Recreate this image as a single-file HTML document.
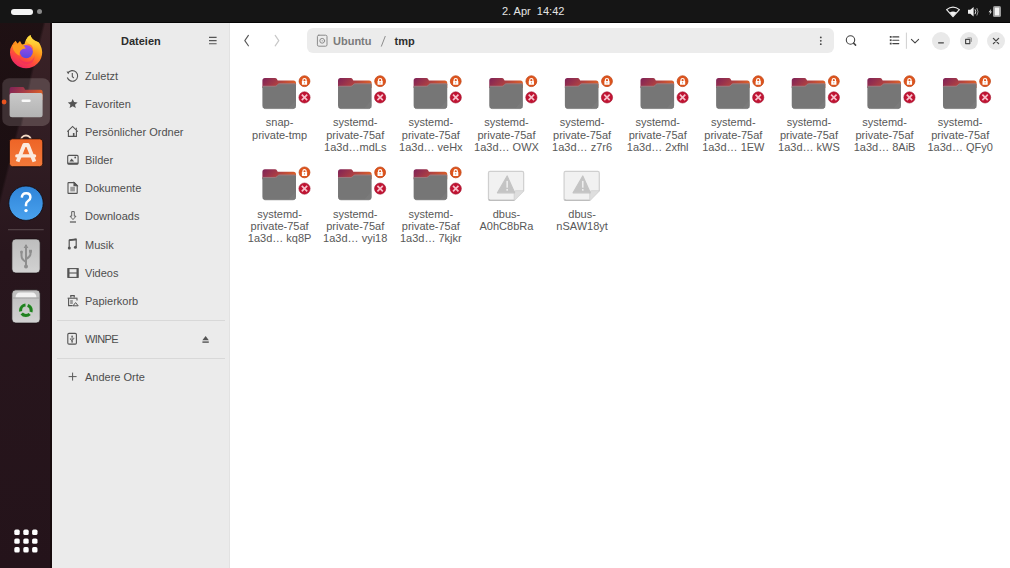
<!DOCTYPE html>
<html><head><meta charset="utf-8">
<style>
*{margin:0;padding:0;box-sizing:border-box}
html,body{width:1010px;height:568px;overflow:hidden;background:#151515;font-family:"Liberation Sans",sans-serif;position:relative}
.abs{position:absolute}
#top{position:absolute;left:0;top:0;width:1010px;height:22px;background:#151515}
#topline{position:absolute;left:52px;top:22px;width:958px;height:1px;background:#050505}
#dock{position:absolute;left:0;top:23px;width:51px;height:545px;
  background:linear-gradient(104deg,rgba(20,10,12,0.72) 23%,rgba(20,10,12,0) 24.5%),linear-gradient(180deg,#3a2226 0px,#311d23 120px,#28161d 230px,#24131a 545px)}
#dockedge{position:absolute;left:50px;top:23px;width:2px;height:545px;background:#160a0c}
#win{position:absolute;left:52px;top:23px;width:958px;height:545px;background:#fff;overflow:hidden}
#side{position:absolute;left:0;top:0;width:177px;height:545px;background:#ebebeb}
#sideedge{position:absolute;left:177px;top:0;width:1px;height:545px;background:#e2e2e2}
.si{position:absolute;left:33px;font-size:11px;color:#4e4e4e;white-space:nowrap;line-height:13px}
.sep{position:absolute;left:5px;width:168px;height:1px;background:#d8d8d8}
.lbl{position:absolute;width:80px;text-align:center;font-size:11px;line-height:12.3px;color:#585858;white-space:nowrap}
#pathbar{position:absolute;left:255px;top:5px;width:527px;height:25px;border-radius:6px;background:#ececec}
.wbtn{position:absolute;top:9px;width:18px;height:18px;border-radius:50%;background:#e9e9e9}
svg{position:absolute;left:0;top:0}
</style></head><body>
<div id="top">
  <div class="abs" style="left:11px;top:8.5px;width:22px;height:6.5px;border-radius:4px;background:#f4f4f4"></div>
  <div class="abs" style="left:37px;top:9.1px;width:5px;height:5px;border-radius:50%;background:#8a8a8a"></div>
  <div class="abs" style="left:502px;top:5px;font-size:11px;color:#e4e4e4;line-height:13px;white-space:pre">2. Apr  14:42</div>
</div>
<div id="topline"></div>
<div id="dock"></div>
<div id="dockedge"></div>
<div id="win">
  <div id="side">
    <div class="abs" style="left:69px;top:12px;font-size:11px;font-weight:bold;color:#2b2b2b;line-height:13px">Dateien</div>
    <div class="si" style="top:47px">Zuletzt</div>
    <div class="si" style="top:75px">Favoriten</div>
    <div class="si" style="top:103px">Persönlicher Ordner</div>
    <div class="si" style="top:131px">Bilder</div>
    <div class="si" style="top:159px">Dokumente</div>
    <div class="si" style="top:187px">Downloads</div>
    <div class="si" style="top:215.6px">Musik</div>
    <div class="si" style="top:243.7px">Videos</div>
    <div class="si" style="top:271.8px">Papierkorb</div>
    <div class="sep" style="top:297px"></div>
    <div class="si" style="top:310px;letter-spacing:-0.6px">WINPE</div>
    <div class="sep" style="top:335px"></div>
    <div class="si" style="top:348px">Andere Orte</div>
  </div>
  <div id="sideedge"></div>
  <div id="pathbar"></div>
  <div class="abs" style="left:281px;top:12px;font-size:11px;font-weight:bold;color:#7a7a7a;line-height:13px">Ubuntu</div>
  <div class="abs" style="left:342.5px;top:12px;font-size:11px;font-weight:bold;color:#2e2e2e;line-height:13px">tmp</div>
  <div class="wbtn" style="left:880px"></div>
  <div class="wbtn" style="left:907.5px"></div>
  <div class="wbtn" style="left:935px"></div>
</div>
<div class="lbl" style="left:239.60px;top:116.34px">snap-<br>private-tmp</div>
<div class="lbl" style="left:315.22px;top:116.34px">systemd-<br>private-75af<br>1a3d…mdLs</div>
<div class="lbl" style="left:390.84px;top:116.34px">systemd-<br>private-75af<br>1a3d… veHx</div>
<div class="lbl" style="left:466.46px;top:116.34px">systemd-<br>private-75af<br>1a3d… OWX</div>
<div class="lbl" style="left:542.08px;top:116.34px">systemd-<br>private-75af<br>1a3d… z7r6</div>
<div class="lbl" style="left:617.70px;top:116.34px">systemd-<br>private-75af<br>1a3d… 2xfhl</div>
<div class="lbl" style="left:693.32px;top:116.34px">systemd-<br>private-75af<br>1a3d… 1EW</div>
<div class="lbl" style="left:768.94px;top:116.34px">systemd-<br>private-75af<br>1a3d… kWS</div>
<div class="lbl" style="left:844.56px;top:116.34px">systemd-<br>private-75af<br>1a3d… 8AiB</div>
<div class="lbl" style="left:920.18px;top:116.34px">systemd-<br>private-75af<br>1a3d… QFy0</div>
<div class="lbl" style="left:239.60px;top:207.54px">systemd-<br>private-75af<br>1a3d… kq8P</div>
<div class="lbl" style="left:315.22px;top:207.54px">systemd-<br>private-75af<br>1a3d… vyi18</div>
<div class="lbl" style="left:390.84px;top:207.54px">systemd-<br>private-75af<br>1a3d… 7kjkr</div>
<div class="lbl" style="left:466.46px;top:207.54px">dbus-<br>A0hC8bRa</div>
<div class="lbl" style="left:542.08px;top:207.54px">dbus-<br>nSAW18yt</div>
<svg width="1010" height="568" viewBox="0 0 1010 568">
<defs>
  <linearGradient id="fback" x1="0" y1="0" x2="1" y2="0.3">
    <stop offset="0" stop-color="#7e2258"/>
    <stop offset="0.5" stop-color="#a83c45"/>
    <stop offset="1" stop-color="#d95e2a"/>
  </linearGradient>
  <linearGradient id="ffront" x1="0" y1="0" x2="0" y2="1">
    <stop offset="0" stop-color="#c9c9c9"/>
    <stop offset="1" stop-color="#b3b3b3"/>
  </linearGradient>
  <linearGradient id="ffring" x1="0.25" y1="1" x2="0.75" y2="0">
    <stop offset="0" stop-color="#e9206c"/>
    <stop offset="0.3" stop-color="#ff4a3e"/>
    <stop offset="0.55" stop-color="#ff8a1c"/>
    <stop offset="0.8" stop-color="#ffc62c"/>
    <stop offset="1" stop-color="#ffe444"/>
  </linearGradient>
  <linearGradient id="ffflame" x1="0" y1="0" x2="0.2" y2="1">
    <stop offset="0" stop-color="#ffdf40" stop-opacity="0.95"/>
    <stop offset="0.55" stop-color="#ffd03a" stop-opacity="0.7"/>
    <stop offset="1" stop-color="#ffb030" stop-opacity="0"/>
  </linearGradient>
  <linearGradient id="ffglobe" x1="0" y1="0" x2="0" y2="1">
    <stop offset="0" stop-color="#a04ae8"/>
    <stop offset="1" stop-color="#5a48e0"/>
  </linearGradient>
  <linearGradient id="helpg" x1="0" y1="0" x2="0" y2="1">
    <stop offset="0" stop-color="#2f84d8"/>
    <stop offset="1" stop-color="#4aa2ee"/>
  </linearGradient>
  <linearGradient id="usbg" x1="0" y1="0" x2="0" y2="1">
    <stop offset="0" stop-color="#bdbdbd"/>
    <stop offset="1" stop-color="#d2d2d2"/>
  </linearGradient>
  <linearGradient id="shopg" x1="0" y1="0" x2="0" y2="1">
    <stop offset="0" stop-color="#ee6426"/>
    <stop offset="1" stop-color="#f3793a"/>
  </linearGradient>
  <linearGradient id="hlg" x1="0" y1="0" x2="1" y2="0.2">
    <stop offset="0" stop-color="#3e3033"/>
    <stop offset="0.55" stop-color="#3e3033"/>
    <stop offset="0.6" stop-color="#574447"/>
    <stop offset="1" stop-color="#574447"/>
  </linearGradient>
</defs>

<!-- ===== top bar right icons ===== -->
<g fill="#f0f0f0">
  <path d="M946.6 9.6 Q953 4.6 959.4 9.6 L953 16.6 Z" fill="none" stroke="#e8e8e8" stroke-width="1.2" stroke-linejoin="round"/>
  <path d="M949.6 12.4 Q953 10.4 956.4 12.4 L953 16.4 Z" fill="#f0f0f0"/>
  <path d="M968 9.8 H970.3 L973.6 7 V16.5 L970.3 13.7 H968 Z"/>
  <path d="M975 9.3 Q976.6 11.75 975 14.2" fill="none" stroke="#e0e0e0" stroke-width="1"/>
  <path d="M976.8 8 Q979.2 11.75 976.8 15.5" fill="none" stroke="#9a9a9a" stroke-width="1"/>
  <rect x="993" y="6" width="8" height="11" rx="1.6" fill="#9a9a9a"/>
  <rect x="994.8" y="7.6" width="4.4" height="7.8" fill="#f4f4f4"/>
  <path d="M991.3 8.8 L988.6 12.2 H990.3 L989.3 15 L992 11.4 H990.4 Z"/>
</g>

<!-- ===== dock ===== -->
<!-- firefox -->
<g>
  <path d="M15.6 40.7 L17.5 43.6 L20 41.1 L21.9 44.4 L24.5 44 Q25 42 25.8 40.2 Q27.4 36.6 30.4 35 Q30.9 37.6 32.6 38.9 Q34.4 40.4 35.6 41.1 L38.5 42.2 Q40.4 44.2 41.1 47 Q42.2 49.4 42.2 52.2 A16.1 16.1 0 0 1 10 52.2 Q10 48.4 11.9 45.5 Q13.4 42.6 15.6 40.7 Z" fill="url(#ffring)"/>
  <path d="M30.4 35 Q30.9 37.6 32.6 38.9 Q34.4 40.4 35.6 41.1 L38.5 42.2 Q40.4 44.2 41.1 47 Q42.2 49.4 42.2 52.2 L33 50 Q30 44 25.8 40.2 Q27.4 36.6 30.4 35 Z" fill="url(#ffflame)"/>
  <circle cx="26.3" cy="51.6" r="6.6" fill="url(#ffglobe)"/>
  <path d="M12.2 45.4 Q17 43.2 21.2 44.4 Q24.6 45.4 25.9 48.6 Q22.6 48.4 20.6 50.4 Q19 52.4 19.7 55.8 Q17.2 55 15.4 52.8 Q13 50 12.2 45.4 Z" fill="#ff9b20"/>
  <path d="M26.5 45 Q31.5 45.4 32.9 50.4 Q33.4 47.2 31.4 45.2 Q29 43.6 26.5 45 Z" fill="#ff5a4a" opacity="0.8"/>
  <path d="M34.6 55.4 Q33 61.4 26.6 62 Q21.4 62 18.8 57.6 Q20.6 64.2 27.4 64.2 Q34.6 63.4 34.6 55.4 Z" fill="#e8246a" opacity="0.45"/>
</g>
<!-- files highlight -->
<rect x="2.3" y="78.3" width="47.6" height="47.6" rx="7" fill="url(#hlg)"/>
<circle cx="4.1" cy="102" r="2.4" fill="#e9541f"/>
<g>
  <path d="M9.6 89 Q9.6 87 11.6 87 H22.6 Q23.8 87 24.3 88 L25 89.7 H40.6 Q42.6 89.7 42.6 91.7 V100 H9.6 Z" fill="url(#fback)"/>
  <path d="M9.6 94.9 Q9.6 92.9 11.6 92.9 H40.6 Q42.6 92.9 42.6 94.9 V114.7 Q42.6 117.2 40.1 117.2 H12.1 Q9.6 117.2 9.6 114.7 Z" fill="url(#ffront)"/>
  <rect x="21.5" y="99.4" width="9.2" height="2.7" rx="1.3" fill="#fafafa"/>
</g>
<!-- app center -->
<g>
  <path d="M21 141.5 V140.4 A5 5 0 0 1 31 140.4 V141.5" fill="none" stroke="#f3d9c4" stroke-width="2"/>
  <rect x="9.4" y="138.8" width="33.4" height="27.9" rx="3.2" fill="url(#shopg)" stroke="#10080a" stroke-width="0.8"/>
  <path d="M17.6 161.6 L24.2 145 H27.8 L34.4 161.6" fill="none" stroke="#fbeadf" stroke-width="3.9" stroke-linejoin="round"/>
  <rect x="15.2" y="154.2" width="21" height="3.2" rx="1.5" fill="#fbeadf"/>
</g>
<!-- help -->
<g>
  <circle cx="26" cy="203.2" r="17.2" fill="url(#helpg)" stroke="#10080a" stroke-width="0.8"/>
  <path d="M21.8 197.6 Q22 193.2 26.2 193.2 Q30.4 193.2 30.4 197.2 Q30.4 199.6 28 201 Q26 202.2 26 204.6 V206.2" fill="none" stroke="#fff" stroke-width="2.5"/>
  <circle cx="26" cy="210.6" r="1.7" fill="#fff"/>
</g>
<rect x="8" y="229.2" width="35.7" height="1" fill="#5a4b4f"/>
<!-- usb -->
<g>
  <rect x="11.8" y="238.9" width="28.4" height="34.2" rx="4" fill="url(#usbg)" stroke="#1a1014" stroke-width="0.8"/>
  <g stroke="#8e8e8e" stroke-width="2" fill="none">
    <path d="M26 245 V266"/>
    <path d="M26 262 Q21.5 259.5 21.5 255.5 V253"/>
    <path d="M26 259 Q30.5 257 30.5 253.5 V251.5"/>
  </g>
  <path d="M23.6 248 L26 244 L28.4 248 Z" fill="#8e8e8e"/>
  <circle cx="26" cy="266.5" r="2" fill="#8e8e8e"/>
  <circle cx="21.5" cy="252" r="1.5" fill="#8e8e8e"/>
  <rect x="29" y="249.8" width="3" height="2.8" fill="#8e8e8e"/>
</g>
<!-- trash -->
<g>
  <rect x="11.8" y="289.8" width="28.4" height="33.3" rx="4" fill="url(#usbg)" stroke="#1a1014" stroke-width="0.8"/>
  <path d="M15.5 297.5 Q16 292.4 20 292.4 H32 Q36 292.4 36.5 297.5 Z" fill="#f2f2f2"/>
  <path d="M13 298 H39" stroke="#9a9a9a" stroke-width="0.8"/>
  <circle cx="25.9" cy="310.3" r="5.3" fill="none" stroke="#9fe09a" stroke-width="3.8" stroke-dasharray="8.8 2.3" stroke-dashoffset="-4" opacity="0.5"/>
  <circle cx="25.9" cy="310.3" r="5.3" fill="none" stroke="#1f801f" stroke-width="3" stroke-dasharray="8.8 2.3" stroke-dashoffset="-4"/>
</g>
<!-- app grid -->
<g fill="#ffffff">
  <rect x="14.3" y="529.6" width="5.4" height="5.4" rx="1.6"/>
  <rect x="23.3" y="529.6" width="5.4" height="5.4" rx="1.6"/>
  <rect x="32.1" y="529.6" width="5.4" height="5.4" rx="1.6"/>
  <rect x="14.3" y="538.4" width="5.4" height="5.4" rx="1.6"/>
  <rect x="23.3" y="538.4" width="5.4" height="5.4" rx="1.6"/>
  <rect x="32.1" y="538.4" width="5.4" height="5.4" rx="1.6"/>
  <rect x="14.3" y="547.1" width="5.4" height="5.4" rx="1.6"/>
  <rect x="23.3" y="547.1" width="5.4" height="5.4" rx="1.6"/>
  <rect x="32.1" y="547.1" width="5.4" height="5.4" rx="1.6"/>
</g>

<!-- ===== sidebar icons ===== -->
<g fill="none" stroke="#545454" stroke-width="1.1">
  <!-- hamburger -->
  <path d="M209 37.4 H216.6 M209 40.6 H216.6 M209 43.8 H216.6" stroke="#555"/>
  <!-- clock -->
  <path d="M67.8 73.2 A5.3 5.3 0 1 1 67.3 77.5"/>
  <path d="M72.3 73 V76.6 L73.8 78" />
  <path d="M66.5 71.5 L69.3 71.8 L68.4 74.3 Z" fill="#545454" stroke="none"/>
  <path d="M72.7 98.9 L74.1 102.1 L77.6 102.4 L75 104.7 L75.8 108.1 L72.7 106.3 L69.6 108.1 L70.4 104.7 L67.8 102.4 L71.3 102.1 Z" fill="#545454" stroke="none"/>
  <!-- house -->
  <path d="M67.3 131.6 L72.6 126.4 L77.8 131.6"/>
  <path d="M68.4 130.8 V136.4 H76.4 V130.8"/>
  <path d="M76.3 129.8 V127.8"/>
  <rect x="72.9" y="133" width="1.6" height="3.4" fill="#545454" stroke="none"/>
  <!-- pictures -->
  <rect x="67.7" y="155.4" width="10.4" height="8.7" rx="1"/>
  <path d="M67.7 163.4 H78.1" stroke-width="1.6"/>
  <path d="M69.4 161.6 L71.6 158.6 L74.2 161.6 Z" fill="#545454" stroke="none"/>
  <circle cx="75.2" cy="157.5" r="0.9" fill="#545454" stroke="none"/>
  <!-- document -->
  <path d="M68 183.2 Q68 182.6 68.6 182.6 H74.2 L77.2 185.6 V193 Q77.2 193.4 76.8 193.4 H68.4 Q68 193.4 68 193 Z"/>
  <path d="M74 182.6 L77.2 185.8 H74 Z" fill="#545454"/>
  <rect x="70.3" y="186.8" width="4.6" height="4.6" fill="#9a9a9a" stroke="none"/>
  <!-- download -->
  <path d="M71.7 211.6 H74.3 V216.2 H76 L73 219.6 L70 216.2 H71.7 Z" stroke-width="0.9"/>
  <path d="M69.9 222 H76" stroke-width="1.2"/>
  <!-- music -->
  <path d="M69.2 247.8 V240.2 L76.2 239.3 V246.8" stroke-width="1.2"/>
  <path d="M69.2 240.2 L76.2 239.3" stroke-width="1.8"/>
  <circle cx="69.3" cy="248" r="1.5" fill="#545454" stroke="none"/>
  <circle cx="75.4" cy="247.3" r="1.5" fill="#545454" stroke="none"/>
  <!-- video -->
  <rect x="67.9" y="268.6" width="10.2" height="8.8" />
  <path d="M68.6 268.6 V277.4 M77.4 268.6 V277.4" stroke-width="1.8"/>
  <path d="M68 273 H78"/>
  <!-- trash -->
  <path d="M68.6 298.3 V305.6 H72.6"/>
  <path d="M67.6 298.2 H77.4"/>
  <path d="M70.8 297.6 V295.6 H74.2 V297.6" stroke-width="1.2"/>
  <path d="M77 298.6 V300.4"/>
  <rect x="70.2" y="300" width="2.6" height="4" fill="#9a9a9a" stroke="none"/>
  <path d="M75.6 302.6 L78.2 305.8 H73 Z" stroke-width="1"/>
  <!-- usb drive -->
  <rect x="67.8" y="333.4" width="8.6" height="10.7" rx="1.2"/>
  <path d="M72.1 336.4 V342 M70.4 338.4 V339.4 L72.1 340.8 M73.8 337.8 V338.8 L72.1 340.2" stroke-width="0.9"/><circle cx="72.1" cy="336.2" r="0.8" fill="#545454" stroke="none"/><circle cx="72.1" cy="342" r="0.8" fill="#545454" stroke="none"/>
  <!-- eject -->
  <path d="M202.4 340.3 L205.6 336 L208.8 340.3 Z" fill="#545454" stroke="none"/>
  <rect x="202.4" y="341.4" width="6.4" height="1.4" fill="#545454" stroke="none"/>
  <!-- plus -->
  <path d="M72.6 372.6 V380.6 M68.6 376.6 H76.6" stroke="#5a5a5a" stroke-width="1"/>
</g>

<!-- ===== header bar icons ===== -->
<g fill="none" stroke="#444" stroke-width="1.2" stroke-linecap="round" stroke-linejoin="round">
  <path d="M248.4 35.4 L244.8 40.6 L248.4 45.8" stroke="#555" stroke-width="1.1"/>
  <path d="M275.2 35.4 L278.8 40.6 L275.2 45.8" stroke="#c8c8c8"/>
  <!-- drive icon -->
  <rect x="317.4" y="35.2" width="9.6" height="11" rx="1.4" stroke="#8a8a8a" stroke-width="1"/>
  <circle cx="322.2" cy="40.8" r="2.4" stroke="#8a8a8a" stroke-width="1"/>
  <circle cx="322.2" cy="40.8" r="0.6" fill="#8a8a8a" stroke="none"/>
  <path d="M385.2 36.4 L381.4 46.2" stroke="#8c8c8c" stroke-width="1"/>
  <!-- kebab -->
  <circle cx="820.8" cy="37.4" r="0.9" fill="#444" stroke="none"/>
  <circle cx="820.8" cy="40.8" r="0.9" fill="#444" stroke="none"/>
  <circle cx="820.8" cy="44.2" r="0.9" fill="#444" stroke="none"/>
  <!-- search -->
  <circle cx="850.5" cy="40" r="4.2" stroke-width="1.1"/>
  <path d="M853.6 43.1 L855.6 45.1" stroke-width="1.5"/>
  <!-- list -->
  <path d="M892.8 36.9 H898.8 M892.8 40.2 H898.8 M892.8 43.6 H898.8" stroke-width="1.1"/>
  <rect x="889.8" y="36" width="1.8" height="1.8" fill="#444" stroke="none"/><rect x="889.8" y="39.3" width="1.8" height="1.8" fill="#444" stroke="none"/><rect x="889.8" y="42.7" width="1.8" height="1.8" fill="#444" stroke="none"/>
  <path d="M906.4 33 V48.4" stroke="#cfcfcf" stroke-width="1"/>
  <path d="M911.4 39.4 L915 42.8 L918.6 39.4" stroke-width="1.1"/>
  <!-- min -->
  <path d="M938.6 42.8 H943.4" stroke-width="1.2"/>
  <!-- max -->
  <rect x="965.6" y="39.4" width="4.2" height="4.2" stroke-width="1.2" stroke="#484848"/>
  <path d="M967.8 37.9 H971.4 V41.5" stroke-width="1" stroke="#9a9a9a"/>
  <!-- close -->
  <path d="M993.4 38.4 L998.6 43.6 M998.6 38.4 L993.4 43.6" stroke-width="1.3"/>
</g>

<!-- ===== file icons ===== -->
<g transform="translate(262.40,78.00)">
<path d="M0 2.5 Q0 0 2.5 0 H12.6 Q14 0 14.6 1.2 L15.3 2.5 H31.1 Q33.6 2.5 33.6 5 V10 H0 Z" fill="url(#fback)"/>
<path d="M0 8.9 Q0 7.9 1 7.9 H13 Q14 7.9 14.6 7.1 L15.4 6.2 Q16 5.5 17 5.5 H32.6 Q33.6 5.5 33.6 6.5 V27.6 Q33.6 30.6 30.6 30.6 H3 Q0 30.6 0 27.6 Z" fill="#767676"/>
<path d="M0.3 8.9 Q0.3 8.2 1 8.2 H13 Q14 8.2 14.6 7.4 L15.4 6.5 Q16 5.8 17 5.8 H32.6 Q33.3 5.8 33.3 6.5" fill="none" stroke="#a87a82" stroke-width="0.9" opacity="0.9"/>
<path d="M0.6 29.4 Q1.2 30.6 3 30.6 H30.6 Q32.4 30.6 33.2 29.2" fill="none" stroke="#5e5e5e" stroke-width="0.8" opacity="0.7"/>
<path d="M33.6 22 V27.6 Q33.6 30.6 30.6 30.6 H26 Z" fill="#858585" opacity="0.3"/>
</g>
<circle cx="304.50" cy="81.20" r="5.4" fill="#de541c" stroke="#c24618" stroke-width="0.8"/>
<path d="M302.90 81.40 V80.10 A1.6 1.6 0 0 1 306.10 80.10 V81.40" fill="none" stroke="#fff" stroke-width="1.2"/>
<rect x="301.90" y="80.90" width="5.2" height="3.8" rx="0.5" fill="#fff"/>
<rect x="304.10" y="81.70" width="0.8" height="1.8" fill="#d88a66"/>
<circle cx="304.50" cy="97.40" r="5.6" fill="#c11433" stroke="#a0102c" stroke-width="0.6"/>
<path d="M301.80 94.70 L307.20 100.10 M307.20 94.70 L301.80 100.10" stroke="#f7c0cb" stroke-width="1.7" stroke-linecap="butt"/>
<g transform="translate(338.02,78.00)">
<path d="M0 2.5 Q0 0 2.5 0 H12.6 Q14 0 14.6 1.2 L15.3 2.5 H31.1 Q33.6 2.5 33.6 5 V10 H0 Z" fill="url(#fback)"/>
<path d="M0 8.9 Q0 7.9 1 7.9 H13 Q14 7.9 14.6 7.1 L15.4 6.2 Q16 5.5 17 5.5 H32.6 Q33.6 5.5 33.6 6.5 V27.6 Q33.6 30.6 30.6 30.6 H3 Q0 30.6 0 27.6 Z" fill="#767676"/>
<path d="M0.3 8.9 Q0.3 8.2 1 8.2 H13 Q14 8.2 14.6 7.4 L15.4 6.5 Q16 5.8 17 5.8 H32.6 Q33.3 5.8 33.3 6.5" fill="none" stroke="#a87a82" stroke-width="0.9" opacity="0.9"/>
<path d="M0.6 29.4 Q1.2 30.6 3 30.6 H30.6 Q32.4 30.6 33.2 29.2" fill="none" stroke="#5e5e5e" stroke-width="0.8" opacity="0.7"/>
<path d="M33.6 22 V27.6 Q33.6 30.6 30.6 30.6 H26 Z" fill="#858585" opacity="0.3"/>
</g>
<circle cx="380.12" cy="81.20" r="5.4" fill="#de541c" stroke="#c24618" stroke-width="0.8"/>
<path d="M378.52 81.40 V80.10 A1.6 1.6 0 0 1 381.72 80.10 V81.40" fill="none" stroke="#fff" stroke-width="1.2"/>
<rect x="377.52" y="80.90" width="5.2" height="3.8" rx="0.5" fill="#fff"/>
<rect x="379.72" y="81.70" width="0.8" height="1.8" fill="#d88a66"/>
<circle cx="380.12" cy="97.40" r="5.6" fill="#c11433" stroke="#a0102c" stroke-width="0.6"/>
<path d="M377.42 94.70 L382.82 100.10 M382.82 94.70 L377.42 100.10" stroke="#f7c0cb" stroke-width="1.7" stroke-linecap="butt"/>
<g transform="translate(413.64,78.00)">
<path d="M0 2.5 Q0 0 2.5 0 H12.6 Q14 0 14.6 1.2 L15.3 2.5 H31.1 Q33.6 2.5 33.6 5 V10 H0 Z" fill="url(#fback)"/>
<path d="M0 8.9 Q0 7.9 1 7.9 H13 Q14 7.9 14.6 7.1 L15.4 6.2 Q16 5.5 17 5.5 H32.6 Q33.6 5.5 33.6 6.5 V27.6 Q33.6 30.6 30.6 30.6 H3 Q0 30.6 0 27.6 Z" fill="#767676"/>
<path d="M0.3 8.9 Q0.3 8.2 1 8.2 H13 Q14 8.2 14.6 7.4 L15.4 6.5 Q16 5.8 17 5.8 H32.6 Q33.3 5.8 33.3 6.5" fill="none" stroke="#a87a82" stroke-width="0.9" opacity="0.9"/>
<path d="M0.6 29.4 Q1.2 30.6 3 30.6 H30.6 Q32.4 30.6 33.2 29.2" fill="none" stroke="#5e5e5e" stroke-width="0.8" opacity="0.7"/>
<path d="M33.6 22 V27.6 Q33.6 30.6 30.6 30.6 H26 Z" fill="#858585" opacity="0.3"/>
</g>
<circle cx="455.74" cy="81.20" r="5.4" fill="#de541c" stroke="#c24618" stroke-width="0.8"/>
<path d="M454.14 81.40 V80.10 A1.6 1.6 0 0 1 457.34 80.10 V81.40" fill="none" stroke="#fff" stroke-width="1.2"/>
<rect x="453.14" y="80.90" width="5.2" height="3.8" rx="0.5" fill="#fff"/>
<rect x="455.34" y="81.70" width="0.8" height="1.8" fill="#d88a66"/>
<circle cx="455.74" cy="97.40" r="5.6" fill="#c11433" stroke="#a0102c" stroke-width="0.6"/>
<path d="M453.04 94.70 L458.44 100.10 M458.44 94.70 L453.04 100.10" stroke="#f7c0cb" stroke-width="1.7" stroke-linecap="butt"/>
<g transform="translate(489.26,78.00)">
<path d="M0 2.5 Q0 0 2.5 0 H12.6 Q14 0 14.6 1.2 L15.3 2.5 H31.1 Q33.6 2.5 33.6 5 V10 H0 Z" fill="url(#fback)"/>
<path d="M0 8.9 Q0 7.9 1 7.9 H13 Q14 7.9 14.6 7.1 L15.4 6.2 Q16 5.5 17 5.5 H32.6 Q33.6 5.5 33.6 6.5 V27.6 Q33.6 30.6 30.6 30.6 H3 Q0 30.6 0 27.6 Z" fill="#767676"/>
<path d="M0.3 8.9 Q0.3 8.2 1 8.2 H13 Q14 8.2 14.6 7.4 L15.4 6.5 Q16 5.8 17 5.8 H32.6 Q33.3 5.8 33.3 6.5" fill="none" stroke="#a87a82" stroke-width="0.9" opacity="0.9"/>
<path d="M0.6 29.4 Q1.2 30.6 3 30.6 H30.6 Q32.4 30.6 33.2 29.2" fill="none" stroke="#5e5e5e" stroke-width="0.8" opacity="0.7"/>
<path d="M33.6 22 V27.6 Q33.6 30.6 30.6 30.6 H26 Z" fill="#858585" opacity="0.3"/>
</g>
<circle cx="531.36" cy="81.20" r="5.4" fill="#de541c" stroke="#c24618" stroke-width="0.8"/>
<path d="M529.76 81.40 V80.10 A1.6 1.6 0 0 1 532.96 80.10 V81.40" fill="none" stroke="#fff" stroke-width="1.2"/>
<rect x="528.76" y="80.90" width="5.2" height="3.8" rx="0.5" fill="#fff"/>
<rect x="530.96" y="81.70" width="0.8" height="1.8" fill="#d88a66"/>
<circle cx="531.36" cy="97.40" r="5.6" fill="#c11433" stroke="#a0102c" stroke-width="0.6"/>
<path d="M528.66 94.70 L534.06 100.10 M534.06 94.70 L528.66 100.10" stroke="#f7c0cb" stroke-width="1.7" stroke-linecap="butt"/>
<g transform="translate(564.88,78.00)">
<path d="M0 2.5 Q0 0 2.5 0 H12.6 Q14 0 14.6 1.2 L15.3 2.5 H31.1 Q33.6 2.5 33.6 5 V10 H0 Z" fill="url(#fback)"/>
<path d="M0 8.9 Q0 7.9 1 7.9 H13 Q14 7.9 14.6 7.1 L15.4 6.2 Q16 5.5 17 5.5 H32.6 Q33.6 5.5 33.6 6.5 V27.6 Q33.6 30.6 30.6 30.6 H3 Q0 30.6 0 27.6 Z" fill="#767676"/>
<path d="M0.3 8.9 Q0.3 8.2 1 8.2 H13 Q14 8.2 14.6 7.4 L15.4 6.5 Q16 5.8 17 5.8 H32.6 Q33.3 5.8 33.3 6.5" fill="none" stroke="#a87a82" stroke-width="0.9" opacity="0.9"/>
<path d="M0.6 29.4 Q1.2 30.6 3 30.6 H30.6 Q32.4 30.6 33.2 29.2" fill="none" stroke="#5e5e5e" stroke-width="0.8" opacity="0.7"/>
<path d="M33.6 22 V27.6 Q33.6 30.6 30.6 30.6 H26 Z" fill="#858585" opacity="0.3"/>
</g>
<circle cx="606.98" cy="81.20" r="5.4" fill="#de541c" stroke="#c24618" stroke-width="0.8"/>
<path d="M605.38 81.40 V80.10 A1.6 1.6 0 0 1 608.58 80.10 V81.40" fill="none" stroke="#fff" stroke-width="1.2"/>
<rect x="604.38" y="80.90" width="5.2" height="3.8" rx="0.5" fill="#fff"/>
<rect x="606.58" y="81.70" width="0.8" height="1.8" fill="#d88a66"/>
<circle cx="606.98" cy="97.40" r="5.6" fill="#c11433" stroke="#a0102c" stroke-width="0.6"/>
<path d="M604.28 94.70 L609.68 100.10 M609.68 94.70 L604.28 100.10" stroke="#f7c0cb" stroke-width="1.7" stroke-linecap="butt"/>
<g transform="translate(640.50,78.00)">
<path d="M0 2.5 Q0 0 2.5 0 H12.6 Q14 0 14.6 1.2 L15.3 2.5 H31.1 Q33.6 2.5 33.6 5 V10 H0 Z" fill="url(#fback)"/>
<path d="M0 8.9 Q0 7.9 1 7.9 H13 Q14 7.9 14.6 7.1 L15.4 6.2 Q16 5.5 17 5.5 H32.6 Q33.6 5.5 33.6 6.5 V27.6 Q33.6 30.6 30.6 30.6 H3 Q0 30.6 0 27.6 Z" fill="#767676"/>
<path d="M0.3 8.9 Q0.3 8.2 1 8.2 H13 Q14 8.2 14.6 7.4 L15.4 6.5 Q16 5.8 17 5.8 H32.6 Q33.3 5.8 33.3 6.5" fill="none" stroke="#a87a82" stroke-width="0.9" opacity="0.9"/>
<path d="M0.6 29.4 Q1.2 30.6 3 30.6 H30.6 Q32.4 30.6 33.2 29.2" fill="none" stroke="#5e5e5e" stroke-width="0.8" opacity="0.7"/>
<path d="M33.6 22 V27.6 Q33.6 30.6 30.6 30.6 H26 Z" fill="#858585" opacity="0.3"/>
</g>
<circle cx="682.60" cy="81.20" r="5.4" fill="#de541c" stroke="#c24618" stroke-width="0.8"/>
<path d="M681.00 81.40 V80.10 A1.6 1.6 0 0 1 684.20 80.10 V81.40" fill="none" stroke="#fff" stroke-width="1.2"/>
<rect x="680.00" y="80.90" width="5.2" height="3.8" rx="0.5" fill="#fff"/>
<rect x="682.20" y="81.70" width="0.8" height="1.8" fill="#d88a66"/>
<circle cx="682.60" cy="97.40" r="5.6" fill="#c11433" stroke="#a0102c" stroke-width="0.6"/>
<path d="M679.90 94.70 L685.30 100.10 M685.30 94.70 L679.90 100.10" stroke="#f7c0cb" stroke-width="1.7" stroke-linecap="butt"/>
<g transform="translate(716.12,78.00)">
<path d="M0 2.5 Q0 0 2.5 0 H12.6 Q14 0 14.6 1.2 L15.3 2.5 H31.1 Q33.6 2.5 33.6 5 V10 H0 Z" fill="url(#fback)"/>
<path d="M0 8.9 Q0 7.9 1 7.9 H13 Q14 7.9 14.6 7.1 L15.4 6.2 Q16 5.5 17 5.5 H32.6 Q33.6 5.5 33.6 6.5 V27.6 Q33.6 30.6 30.6 30.6 H3 Q0 30.6 0 27.6 Z" fill="#767676"/>
<path d="M0.3 8.9 Q0.3 8.2 1 8.2 H13 Q14 8.2 14.6 7.4 L15.4 6.5 Q16 5.8 17 5.8 H32.6 Q33.3 5.8 33.3 6.5" fill="none" stroke="#a87a82" stroke-width="0.9" opacity="0.9"/>
<path d="M0.6 29.4 Q1.2 30.6 3 30.6 H30.6 Q32.4 30.6 33.2 29.2" fill="none" stroke="#5e5e5e" stroke-width="0.8" opacity="0.7"/>
<path d="M33.6 22 V27.6 Q33.6 30.6 30.6 30.6 H26 Z" fill="#858585" opacity="0.3"/>
</g>
<circle cx="758.22" cy="81.20" r="5.4" fill="#de541c" stroke="#c24618" stroke-width="0.8"/>
<path d="M756.62 81.40 V80.10 A1.6 1.6 0 0 1 759.82 80.10 V81.40" fill="none" stroke="#fff" stroke-width="1.2"/>
<rect x="755.62" y="80.90" width="5.2" height="3.8" rx="0.5" fill="#fff"/>
<rect x="757.82" y="81.70" width="0.8" height="1.8" fill="#d88a66"/>
<circle cx="758.22" cy="97.40" r="5.6" fill="#c11433" stroke="#a0102c" stroke-width="0.6"/>
<path d="M755.52 94.70 L760.92 100.10 M760.92 94.70 L755.52 100.10" stroke="#f7c0cb" stroke-width="1.7" stroke-linecap="butt"/>
<g transform="translate(791.74,78.00)">
<path d="M0 2.5 Q0 0 2.5 0 H12.6 Q14 0 14.6 1.2 L15.3 2.5 H31.1 Q33.6 2.5 33.6 5 V10 H0 Z" fill="url(#fback)"/>
<path d="M0 8.9 Q0 7.9 1 7.9 H13 Q14 7.9 14.6 7.1 L15.4 6.2 Q16 5.5 17 5.5 H32.6 Q33.6 5.5 33.6 6.5 V27.6 Q33.6 30.6 30.6 30.6 H3 Q0 30.6 0 27.6 Z" fill="#767676"/>
<path d="M0.3 8.9 Q0.3 8.2 1 8.2 H13 Q14 8.2 14.6 7.4 L15.4 6.5 Q16 5.8 17 5.8 H32.6 Q33.3 5.8 33.3 6.5" fill="none" stroke="#a87a82" stroke-width="0.9" opacity="0.9"/>
<path d="M0.6 29.4 Q1.2 30.6 3 30.6 H30.6 Q32.4 30.6 33.2 29.2" fill="none" stroke="#5e5e5e" stroke-width="0.8" opacity="0.7"/>
<path d="M33.6 22 V27.6 Q33.6 30.6 30.6 30.6 H26 Z" fill="#858585" opacity="0.3"/>
</g>
<circle cx="833.84" cy="81.20" r="5.4" fill="#de541c" stroke="#c24618" stroke-width="0.8"/>
<path d="M832.24 81.40 V80.10 A1.6 1.6 0 0 1 835.44 80.10 V81.40" fill="none" stroke="#fff" stroke-width="1.2"/>
<rect x="831.24" y="80.90" width="5.2" height="3.8" rx="0.5" fill="#fff"/>
<rect x="833.44" y="81.70" width="0.8" height="1.8" fill="#d88a66"/>
<circle cx="833.84" cy="97.40" r="5.6" fill="#c11433" stroke="#a0102c" stroke-width="0.6"/>
<path d="M831.14 94.70 L836.54 100.10 M836.54 94.70 L831.14 100.10" stroke="#f7c0cb" stroke-width="1.7" stroke-linecap="butt"/>
<g transform="translate(867.36,78.00)">
<path d="M0 2.5 Q0 0 2.5 0 H12.6 Q14 0 14.6 1.2 L15.3 2.5 H31.1 Q33.6 2.5 33.6 5 V10 H0 Z" fill="url(#fback)"/>
<path d="M0 8.9 Q0 7.9 1 7.9 H13 Q14 7.9 14.6 7.1 L15.4 6.2 Q16 5.5 17 5.5 H32.6 Q33.6 5.5 33.6 6.5 V27.6 Q33.6 30.6 30.6 30.6 H3 Q0 30.6 0 27.6 Z" fill="#767676"/>
<path d="M0.3 8.9 Q0.3 8.2 1 8.2 H13 Q14 8.2 14.6 7.4 L15.4 6.5 Q16 5.8 17 5.8 H32.6 Q33.3 5.8 33.3 6.5" fill="none" stroke="#a87a82" stroke-width="0.9" opacity="0.9"/>
<path d="M0.6 29.4 Q1.2 30.6 3 30.6 H30.6 Q32.4 30.6 33.2 29.2" fill="none" stroke="#5e5e5e" stroke-width="0.8" opacity="0.7"/>
<path d="M33.6 22 V27.6 Q33.6 30.6 30.6 30.6 H26 Z" fill="#858585" opacity="0.3"/>
</g>
<circle cx="909.46" cy="81.20" r="5.4" fill="#de541c" stroke="#c24618" stroke-width="0.8"/>
<path d="M907.86 81.40 V80.10 A1.6 1.6 0 0 1 911.06 80.10 V81.40" fill="none" stroke="#fff" stroke-width="1.2"/>
<rect x="906.86" y="80.90" width="5.2" height="3.8" rx="0.5" fill="#fff"/>
<rect x="909.06" y="81.70" width="0.8" height="1.8" fill="#d88a66"/>
<circle cx="909.46" cy="97.40" r="5.6" fill="#c11433" stroke="#a0102c" stroke-width="0.6"/>
<path d="M906.76 94.70 L912.16 100.10 M912.16 94.70 L906.76 100.10" stroke="#f7c0cb" stroke-width="1.7" stroke-linecap="butt"/>
<g transform="translate(942.98,78.00)">
<path d="M0 2.5 Q0 0 2.5 0 H12.6 Q14 0 14.6 1.2 L15.3 2.5 H31.1 Q33.6 2.5 33.6 5 V10 H0 Z" fill="url(#fback)"/>
<path d="M0 8.9 Q0 7.9 1 7.9 H13 Q14 7.9 14.6 7.1 L15.4 6.2 Q16 5.5 17 5.5 H32.6 Q33.6 5.5 33.6 6.5 V27.6 Q33.6 30.6 30.6 30.6 H3 Q0 30.6 0 27.6 Z" fill="#767676"/>
<path d="M0.3 8.9 Q0.3 8.2 1 8.2 H13 Q14 8.2 14.6 7.4 L15.4 6.5 Q16 5.8 17 5.8 H32.6 Q33.3 5.8 33.3 6.5" fill="none" stroke="#a87a82" stroke-width="0.9" opacity="0.9"/>
<path d="M0.6 29.4 Q1.2 30.6 3 30.6 H30.6 Q32.4 30.6 33.2 29.2" fill="none" stroke="#5e5e5e" stroke-width="0.8" opacity="0.7"/>
<path d="M33.6 22 V27.6 Q33.6 30.6 30.6 30.6 H26 Z" fill="#858585" opacity="0.3"/>
</g>
<circle cx="985.08" cy="81.20" r="5.4" fill="#de541c" stroke="#c24618" stroke-width="0.8"/>
<path d="M983.48 81.40 V80.10 A1.6 1.6 0 0 1 986.68 80.10 V81.40" fill="none" stroke="#fff" stroke-width="1.2"/>
<rect x="982.48" y="80.90" width="5.2" height="3.8" rx="0.5" fill="#fff"/>
<rect x="984.68" y="81.70" width="0.8" height="1.8" fill="#d88a66"/>
<circle cx="985.08" cy="97.40" r="5.6" fill="#c11433" stroke="#a0102c" stroke-width="0.6"/>
<path d="M982.38 94.70 L987.78 100.10 M987.78 94.70 L982.38 100.10" stroke="#f7c0cb" stroke-width="1.7" stroke-linecap="butt"/>
<g transform="translate(262.40,169.20)">
<path d="M0 2.5 Q0 0 2.5 0 H12.6 Q14 0 14.6 1.2 L15.3 2.5 H31.1 Q33.6 2.5 33.6 5 V10 H0 Z" fill="url(#fback)"/>
<path d="M0 8.9 Q0 7.9 1 7.9 H13 Q14 7.9 14.6 7.1 L15.4 6.2 Q16 5.5 17 5.5 H32.6 Q33.6 5.5 33.6 6.5 V27.6 Q33.6 30.6 30.6 30.6 H3 Q0 30.6 0 27.6 Z" fill="#767676"/>
<path d="M0.3 8.9 Q0.3 8.2 1 8.2 H13 Q14 8.2 14.6 7.4 L15.4 6.5 Q16 5.8 17 5.8 H32.6 Q33.3 5.8 33.3 6.5" fill="none" stroke="#a87a82" stroke-width="0.9" opacity="0.9"/>
<path d="M0.6 29.4 Q1.2 30.6 3 30.6 H30.6 Q32.4 30.6 33.2 29.2" fill="none" stroke="#5e5e5e" stroke-width="0.8" opacity="0.7"/>
<path d="M33.6 22 V27.6 Q33.6 30.6 30.6 30.6 H26 Z" fill="#858585" opacity="0.3"/>
</g>
<circle cx="304.50" cy="172.40" r="5.4" fill="#de541c" stroke="#c24618" stroke-width="0.8"/>
<path d="M302.90 172.60 V171.30 A1.6 1.6 0 0 1 306.10 171.30 V172.60" fill="none" stroke="#fff" stroke-width="1.2"/>
<rect x="301.90" y="172.10" width="5.2" height="3.8" rx="0.5" fill="#fff"/>
<rect x="304.10" y="172.90" width="0.8" height="1.8" fill="#d88a66"/>
<circle cx="304.50" cy="188.60" r="5.6" fill="#c11433" stroke="#a0102c" stroke-width="0.6"/>
<path d="M301.80 185.90 L307.20 191.30 M307.20 185.90 L301.80 191.30" stroke="#f7c0cb" stroke-width="1.7" stroke-linecap="butt"/>
<g transform="translate(338.02,169.20)">
<path d="M0 2.5 Q0 0 2.5 0 H12.6 Q14 0 14.6 1.2 L15.3 2.5 H31.1 Q33.6 2.5 33.6 5 V10 H0 Z" fill="url(#fback)"/>
<path d="M0 8.9 Q0 7.9 1 7.9 H13 Q14 7.9 14.6 7.1 L15.4 6.2 Q16 5.5 17 5.5 H32.6 Q33.6 5.5 33.6 6.5 V27.6 Q33.6 30.6 30.6 30.6 H3 Q0 30.6 0 27.6 Z" fill="#767676"/>
<path d="M0.3 8.9 Q0.3 8.2 1 8.2 H13 Q14 8.2 14.6 7.4 L15.4 6.5 Q16 5.8 17 5.8 H32.6 Q33.3 5.8 33.3 6.5" fill="none" stroke="#a87a82" stroke-width="0.9" opacity="0.9"/>
<path d="M0.6 29.4 Q1.2 30.6 3 30.6 H30.6 Q32.4 30.6 33.2 29.2" fill="none" stroke="#5e5e5e" stroke-width="0.8" opacity="0.7"/>
<path d="M33.6 22 V27.6 Q33.6 30.6 30.6 30.6 H26 Z" fill="#858585" opacity="0.3"/>
</g>
<circle cx="380.12" cy="172.40" r="5.4" fill="#de541c" stroke="#c24618" stroke-width="0.8"/>
<path d="M378.52 172.60 V171.30 A1.6 1.6 0 0 1 381.72 171.30 V172.60" fill="none" stroke="#fff" stroke-width="1.2"/>
<rect x="377.52" y="172.10" width="5.2" height="3.8" rx="0.5" fill="#fff"/>
<rect x="379.72" y="172.90" width="0.8" height="1.8" fill="#d88a66"/>
<circle cx="380.12" cy="188.60" r="5.6" fill="#c11433" stroke="#a0102c" stroke-width="0.6"/>
<path d="M377.42 185.90 L382.82 191.30 M382.82 185.90 L377.42 191.30" stroke="#f7c0cb" stroke-width="1.7" stroke-linecap="butt"/>
<g transform="translate(413.64,169.20)">
<path d="M0 2.5 Q0 0 2.5 0 H12.6 Q14 0 14.6 1.2 L15.3 2.5 H31.1 Q33.6 2.5 33.6 5 V10 H0 Z" fill="url(#fback)"/>
<path d="M0 8.9 Q0 7.9 1 7.9 H13 Q14 7.9 14.6 7.1 L15.4 6.2 Q16 5.5 17 5.5 H32.6 Q33.6 5.5 33.6 6.5 V27.6 Q33.6 30.6 30.6 30.6 H3 Q0 30.6 0 27.6 Z" fill="#767676"/>
<path d="M0.3 8.9 Q0.3 8.2 1 8.2 H13 Q14 8.2 14.6 7.4 L15.4 6.5 Q16 5.8 17 5.8 H32.6 Q33.3 5.8 33.3 6.5" fill="none" stroke="#a87a82" stroke-width="0.9" opacity="0.9"/>
<path d="M0.6 29.4 Q1.2 30.6 3 30.6 H30.6 Q32.4 30.6 33.2 29.2" fill="none" stroke="#5e5e5e" stroke-width="0.8" opacity="0.7"/>
<path d="M33.6 22 V27.6 Q33.6 30.6 30.6 30.6 H26 Z" fill="#858585" opacity="0.3"/>
</g>
<circle cx="455.74" cy="172.40" r="5.4" fill="#de541c" stroke="#c24618" stroke-width="0.8"/>
<path d="M454.14 172.60 V171.30 A1.6 1.6 0 0 1 457.34 171.30 V172.60" fill="none" stroke="#fff" stroke-width="1.2"/>
<rect x="453.14" y="172.10" width="5.2" height="3.8" rx="0.5" fill="#fff"/>
<rect x="455.34" y="172.90" width="0.8" height="1.8" fill="#d88a66"/>
<circle cx="455.74" cy="188.60" r="5.6" fill="#c11433" stroke="#a0102c" stroke-width="0.6"/>
<path d="M453.04 185.90 L458.44 191.30 M458.44 185.90 L453.04 191.30" stroke="#f7c0cb" stroke-width="1.7" stroke-linecap="butt"/>
<g transform="translate(488.46,171.40)">
<path d="M1.5 0 H33.7 Q35.2 0 35.2 1.5 V19.3 L25.7 29 H1.5 Q0 29 0 27.5 V1.5 Q0 0 1.5 0 Z" fill="#f1f1f1" stroke="#cfcfcf" stroke-width="1.2"/>
<path d="M0.6 27.8 Q1 29 2 29 H25.7" fill="none" stroke="#bdbdbd" stroke-width="1.4"/>
<path d="M25.7 29 V21 Q25.7 19.3 27.4 19.3 H35.2" fill="#dedede" stroke="#cfcfcf" stroke-width="0.8"/>
<path d="M18.7 4.6 L26.2 21.4 H9.0 Z" fill="#c4c4c4" stroke="#c4c4c4" stroke-width="1.2" stroke-linejoin="round"/>
<rect x="17.9" y="9.5" width="1.6" height="6.8" fill="#ededed"/>
<rect x="17.9" y="17.6" width="1.6" height="1.7" fill="#ededed"/>
</g>
<g transform="translate(564.08,171.40)">
<path d="M1.5 0 H33.7 Q35.2 0 35.2 1.5 V19.3 L25.7 29 H1.5 Q0 29 0 27.5 V1.5 Q0 0 1.5 0 Z" fill="#f1f1f1" stroke="#cfcfcf" stroke-width="1.2"/>
<path d="M0.6 27.8 Q1 29 2 29 H25.7" fill="none" stroke="#bdbdbd" stroke-width="1.4"/>
<path d="M25.7 29 V21 Q25.7 19.3 27.4 19.3 H35.2" fill="#dedede" stroke="#cfcfcf" stroke-width="0.8"/>
<path d="M18.7 4.6 L26.2 21.4 H9.0 Z" fill="#c4c4c4" stroke="#c4c4c4" stroke-width="1.2" stroke-linejoin="round"/>
<rect x="17.9" y="9.5" width="1.6" height="6.8" fill="#ededed"/>
<rect x="17.9" y="17.6" width="1.6" height="1.7" fill="#ededed"/>
</g>
</svg>
</body></html>
